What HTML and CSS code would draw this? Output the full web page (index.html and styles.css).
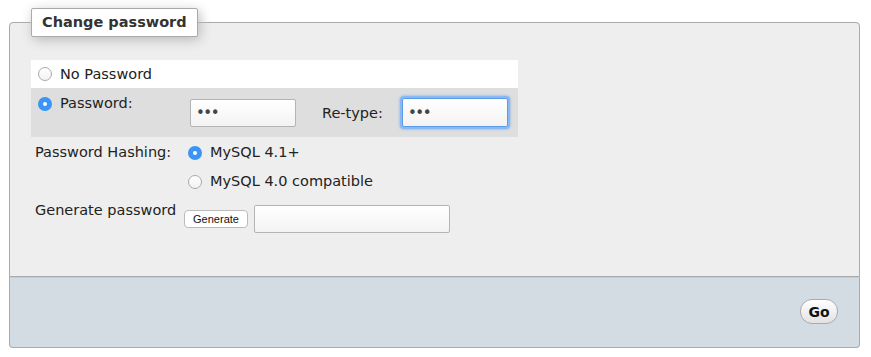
FILE: index.html
```html
<!DOCTYPE html>
<html>
<head>
<meta charset="utf-8">
<link rel="stylesheet" href="styles.css">
</head>
<body>
<div class="wrap">
  <fieldset class="box">
    <legend class="legend">Change password</legend>
    <div class="pwtable">
      <div class="row row-white">
        <span class="radio"></span>
        <span class="lbl">No Password</span>
      </div>
      <div class="row row-gray">
        <div class="cell-first">
          <span class="radio on"></span>
          <span class="lbl">Password:</span>
        </div>
        <input class="inp pw" type="password" value="abc">
        <span class="lbl retype">Re-type:</span>
        <input class="inp pw focus" type="password" value="abc">
      </div>
    </div>
    <div class="hash">
      <div class="hash-label">Password Hashing:</div>
      <div class="hash-opts">
        <div class="opt"><span class="radio on"></span><span class="lbl">MySQL 4.1+</span></div>
        <div class="opt"><span class="radio"></span><span class="lbl">MySQL 4.0 compatible</span></div>
      </div>
    </div>
    <div class="gen">
      <div class="gen-label">Generate password</div>
      <button class="btn-gen" type="button">Generate</button>
      <input class="inp gen-inp" type="text" value="">
    </div>
  </fieldset>
  <div class="footer">
    <button class="btn-go" type="button">Go</button>
  </div>
</div>
</body>
</html>
```
FILE: styles.css
```css
html, body {
  margin: 0;
  padding: 0;
  background: #fff;
}
body {
  font-family: "DejaVu Sans", Verdana, sans-serif;
  font-size: 14.5px;
  color: #222;
}
.wrap {
  padding: 8px 11px 10px 9px;
}
.box {
  margin: 0;
  padding: 23px 21px 43px 21px;
  border: 1px solid #aaa;
  border-radius: 4px 4px 0 0;
  background: #eee;
  min-width: 0;
}
.legend {
  padding: 5px 10px 5px 10px;
  margin: 0;
  border: 1px solid #aaa;
  border-radius: 2px;
  background: #fff;
  box-shadow: 2px 3px 12px #bbb;
  font-weight: bold;
  font-size: 14.5px;
  line-height: 17px;
  color: #333;
}
.pwtable {
  width: 487px;
}
.row {
  display: flex;
  align-items: center;
}
.row-white {
  background: #fff;
  height: 28px;
  padding-left: 7px;
}
.row-gray {
  background: #dedede;
  height: 49px;
  align-items: flex-start;
  padding-left: 7px;
}
.cell-first {
  display: flex;
  align-items: center;
  width: 152px;
  padding-top: 7px;
}
.radio {
  display: inline-block;
  box-sizing: border-box;
  width: 14px;
  height: 14px;
  border-radius: 50%;
  border: 1px solid #aaa;
  background: linear-gradient(#fff, #f2f2f2);
  margin-right: 8px;
  flex: none;
  position: relative;
}
.radio.on {
  border: none;
  background: #3a95f6;
}
.radio.on::after {
  content: "";
  position: absolute;
  left: 5px;
  top: 5px;
  width: 4px;
  height: 4px;
  border-radius: 50%;
  background: #fff;
}
.lbl {
  line-height: 17px;
}
.inp {
  box-sizing: border-box;
  width: 106px;
  height: 28px;
  margin: 11px 0 0 0;
  padding: 0 5px;
  border: 1px solid #b4b4b4;
  border-radius: 2px;
  background: linear-gradient(#fff, #f3f3f3);
  font-family: "DejaVu Sans", sans-serif;
  font-size: 15px;
  color: #444;
  outline: none;
}
.inp.pw {
  letter-spacing: -1.5px;
}
.retype {
  margin: 17px 0 0 26px;
  width: 80px;
}
.inp.focus {
  margin-top: 10px;
  height: 29px;
  border: 1px solid #5b9be8;
  box-shadow: 0 0 0 2px #8ab9f2, 0 0 3px 2px #7aaeee;
}
.hash {
  display: flex;
  margin-top: 1px;
  margin-left: 4px;
}
.hash-label {
  width: 153px;
  line-height: 29px;
}
.hash-opts {
  display: flex;
  flex-direction: column;
}
.opt {
  display: flex;
  align-items: center;
  height: 29px;
}
.opt .radio {
  margin-right: 8px;
}
.gen {
  display: flex;
  align-items: flex-start;
  margin-top: 4px;
  margin-left: 4px;
}
.gen-label {
  width: 149px;
  line-height: 20px;
}
.btn-gen {
  box-sizing: border-box;
  height: 18px;
  width: 64px;
  margin: 10px 0 0 0;
  padding: 0;
  border: 1px solid #bbb;
  border-radius: 4px;
  background: #fff;
  font-family: "Liberation Sans", Arial, sans-serif;
  font-size: 11px;
  color: #111;
}
.gen-inp {
  width: 196px;
  margin: 5px 0 0 6px;
}
.footer {
  height: 69px;
  border: 1px solid #aaa;
  border-top: 1px solid #c4ccd4;
  border-radius: 0 0 4px 4px;
  background: #d3dbe3;
  display: flex;
  justify-content: flex-end;
  align-items: flex-start;
  padding-right: 21px;
}
.btn-go {
  margin-top: 21px;
  box-sizing: border-box;
  width: 38px;
  height: 25px;
  padding: 0;
  border: 1px solid #aaa;
  border-radius: 12px;
  background: linear-gradient(#fff, #e2e2e2);
  font-family: "DejaVu Sans", sans-serif;
  font-weight: bold;
  font-size: 14px;
  color: #111;
}
```
